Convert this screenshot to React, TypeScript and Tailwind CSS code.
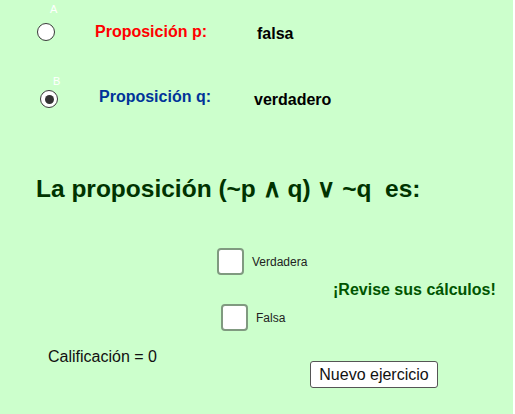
import React, { useState } from "react";

type Choice = "A" | "B";

function Radio({ checked, onClick }: { checked: boolean; onClick: () => void }) {
  return (
    <button
      onClick={onClick}
      className="flex h-[18px] w-[18px] shrink-0 items-center justify-center rounded-full border-[1.5px] border-[#3a3a3a] bg-white"
    >
      {checked && <span className="h-[9px] w-[9px] rounded-full bg-[#333333]" />}
    </button>
  );
}

function Check({ label, className }: { label: string; className: string }) {
  const [on, setOn] = useState(false);
  return (
    <div className={`flex h-[27px] items-center ${className}`}>
      <button
        onClick={() => setOn(!on)}
        className="flex h-[27px] w-[27px] shrink-0 items-center justify-center rounded-[4px] border-2 border-[#809a80] bg-white text-[16px] leading-none text-[#333]"
      >
        {on ? "✓" : ""}
      </button>
      <span className="ml-[8px] text-[12px] leading-none text-[#222]">{label}</span>
    </div>
  );
}

export default function App() {
  const [sel, setSel] = useState<Choice>("B");

  return (
    <div className="flex h-[414px] w-[515px] bg-white" style={{ fontFamily: '"Liberation Sans", Arial, sans-serif' }}>
      <div className="flex h-full w-[513px] flex-col bg-[#ccffcc]">
        {/* proposition p */}
        <div className="ml-[50px] mt-[4px] h-[10px] text-[11px] leading-none text-white">A</div>
        <div className="mt-[9px] flex h-[18px] items-center">
          <div className="ml-[37px]">
            <Radio checked={sel === "A"} onClick={() => setSel("A")} />
          </div>
          <span className="ml-[40px] w-[162px] text-[16px] font-bold leading-none text-[#ff0000]">Proposición p:</span>
          <span className="mt-[3px] text-[16px] font-bold leading-none text-black">falsa</span>
        </div>

        {/* proposition q */}
        <div className="ml-[53px] mt-[35px] h-[11px] text-[11px] leading-none text-white">B</div>
        <div className="mt-[3px] flex h-[18px] items-center">
          <div className="ml-[40px]">
            <Radio checked={sel === "B"} onClick={() => setSel("B")} />
          </div>
          <span className="mb-[4px] ml-[41px] w-[155px] text-[16px] font-bold leading-none text-[#003399]">Proposición q:</span>
          <span className="mt-[1px] text-[16px] font-bold leading-none text-black">verdadero</span>
        </div>

        {/* statement */}
        <div className="ml-[36px] mt-[69px] h-[25px] text-[24.5px] font-bold leading-none text-[#003300]">
          La proposición (~p ∧ q) ∨ ~q&nbsp; es:
        </div>

        {/* answers */}
        <Check label="Verdadera" className="ml-[217px] mt-[46px]" />
        <div className="ml-[333px] mt-[7px] h-[16px] text-[16px] font-bold leading-none text-[#005500]">¡Revise sus cálculos!</div>
        <Check label="Falsa" className="ml-[221px] mt-[6px]" />

        {/* score and reset */}
        <div className="mt-[18px] flex items-start">
          <span className="ml-[48px] w-[262px] text-[16px] leading-none text-[#111]">Calificación = 0</span>
          <button className="mt-[12px] h-[27px] w-[128px] rounded-[3px] border border-[#555] bg-white text-[16px] leading-none text-[#111]">
            Nuevo ejercicio
          </button>
        </div>
      </div>
    </div>
  );
}
